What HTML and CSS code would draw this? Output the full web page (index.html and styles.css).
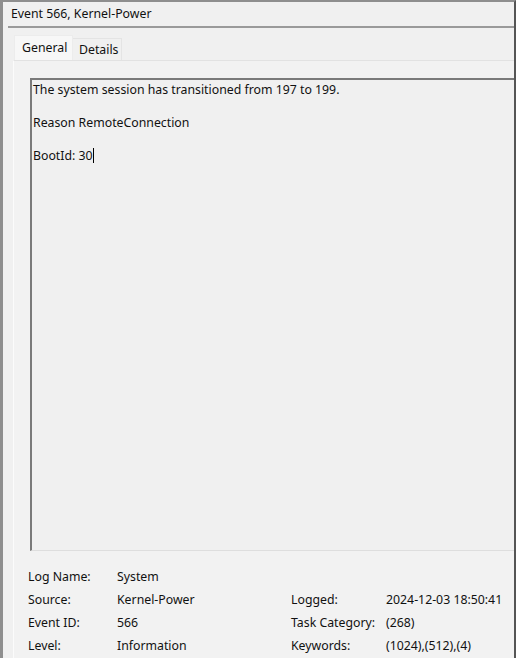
FILE: index.html
```html
<!DOCTYPE html>
<html>
<head>
<meta charset="utf-8">
<link rel="stylesheet" href="styles.css">
</head>
<body>
<div class="window">
  <div class="title">Event 566, Kernel-Power</div>
  <div class="tabs">
    <div class="tab selected">General</div>
    <div class="tab">Details</div>
  </div>
  <div class="panel">
    <div class="textbox">
      <p>The system session has transitioned from 197 to 199.</p>
      <p>Reason RemoteConnection</p>
      <p>BootId: 30<span class="caret"></span></p>
    </div>
    <div class="fields">
      <span class="label">Log Name:</span><span>System</span><span></span><span></span>
      <span class="label">Source:</span><span>Kernel-Power</span><span class="label">Logged:</span><span>2024-12-03 18:50:41</span>
      <span class="label">Event ID:</span><span>566</span><span class="label">Task Category:</span><span>(268)</span>
      <span class="label">Level:</span><span>Information</span><span class="label">Keywords:</span><span>(1024),(512),(4)</span>
    </div>
  </div>
</div>
</body>
</html>
```

FILE: styles.css
```css
html, body {
  margin: 0;
  padding: 0;
}
body {
  width: 516px;
  height: 658px;
  overflow: hidden;
  background: #f0f0f0;
  font-family: "Noto Sans", "Open Sans", sans-serif;
  font-size: 12.3px;
  color: #111;
}
.window {
  box-sizing: border-box;
  width: 516px;
  height: 658px;
  border-top: 2px solid #8e8e8e;
  border-left: 3px solid #8e8e8e;
  border-right: 2px solid #555;
  display: flex;
  flex-direction: column;
  overflow: hidden;
}
.title {
  height: 24px;
  line-height: 24px;
  margin-left: 5px;
  padding-left: 3px;
  border-bottom: 2px solid #9a9a9a;
  white-space: nowrap;
}
.tabs {
  display: flex;
  align-items: flex-end;
  margin-top: 7px;
  margin-left: 11px;
  height: 25px;
}
.tab {
  box-sizing: border-box;
  height: 22px;
  line-height: 21px;
  padding: 0 6px;
  background: #f0f0f0;
  border: 1px solid #e4e4e4;
  border-bottom: none;
}
.tab.selected {
  height: 25px;
  line-height: 23px;
  width: 59px;
  padding: 0 7px;
  background: #f7f7f7;
  border-color: #ececec;
}
.tab:not(.selected) {
  width: 49px;
  border-left: none;
}
.panel {
  flex: 1;
  margin-left: 10px;
  background: #f2f2f2;
  border-top: 1px solid #e2e2e2;
  border-left: 1px solid #fbfbfb;
  padding: 17px 0 0 16px;
  display: flex;
  flex-direction: column;
}
.textbox {
  box-sizing: border-box;
  height: 473px;
  margin-right: -20px;
  border-top: 2px solid #7a7a7a;
  border-left: 2px solid #7a7a7a;
  border-bottom: 1px solid #dedede;
  background: #f0f0f0;
  padding: 2px 0 0 1px;
}
.textbox p {
  margin: 0 0 17px 0;
  line-height: 16px;
  white-space: nowrap;
}
.caret {
  display: inline-block;
  width: 1px;
  height: 15px;
  background: #000;
  vertical-align: -3px;
}
.fields {
  display: grid;
  grid-template-columns: 89px 174px 95px auto;
  grid-auto-rows: 23px;
  align-items: center;
  margin-top: 14px;
  margin-left: -2px;
  white-space: nowrap;
}
```
